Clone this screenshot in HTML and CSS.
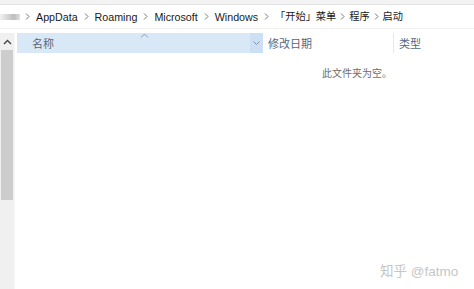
FILE: index.html
```html
<!DOCTYPE html>
<html lang="zh-CN">
<head>
    <meta charset="UTF-8">
    <title>启动</title>
    <link rel="stylesheet" href="styles.css">
</head>
<body>
    <div class="top-strip"></div>
    <div class="address">
        <span class="blur-icon"></span>
        <span class="sep"><svg width="5" height="7" viewBox="0 0 5 7"><path d="M1 0.5 L4 3.5 L1 6.5" fill="none" stroke="#777" stroke-width="1"/></svg></span>
        <span class="crumb">AppData</span>
        <span class="sep"><svg width="5" height="7" viewBox="0 0 5 7"><path d="M1 0.5 L4 3.5 L1 6.5" fill="none" stroke="#777" stroke-width="1"/></svg></span>
        <span class="crumb">Roaming</span>
        <span class="sep"><svg width="5" height="7" viewBox="0 0 5 7"><path d="M1 0.5 L4 3.5 L1 6.5" fill="none" stroke="#777" stroke-width="1"/></svg></span>
        <span class="crumb">Microsoft</span>
        <span class="sep"><svg width="5" height="7" viewBox="0 0 5 7"><path d="M1 0.5 L4 3.5 L1 6.5" fill="none" stroke="#777" stroke-width="1"/></svg></span>
        <span class="crumb">Windows</span>
        <span class="sep"><svg width="5" height="7" viewBox="0 0 5 7"><path d="M1 0.5 L4 3.5 L1 6.5" fill="none" stroke="#777" stroke-width="1"/></svg></span>
        <span class="crumb cjk">「开始」菜单</span>
        <span class="sep sep-cjk"><svg width="5" height="7" viewBox="0 0 5 7"><path d="M1 0.5 L4 3.5 L1 6.5" fill="none" stroke="#777" stroke-width="1"/></svg></span>
        <span class="crumb cjk">程序</span>
        <span class="sep sep-cjk"><svg width="5" height="7" viewBox="0 0 5 7"><path d="M1 0.5 L4 3.5 L1 6.5" fill="none" stroke="#777" stroke-width="1"/></svg></span>
        <span class="crumb cjk">启动</span>
    </div>
    <div class="main">
        <div class="scrollbar">
            <div class="scroll-up"><svg width="9" height="6" viewBox="0 0 9 6"><path d="M1 5 L4.5 1.5 L8 5" fill="none" stroke="#444" stroke-width="1.4"/></svg></div>
            <div class="scroll-thumb"></div>
        </div>
        <div class="content">
            <div class="header">
                <div class="col col-name">
                    <span class="col-label">名称</span>
                    <svg class="sort-arrow" width="9" height="5" viewBox="0 0 9 5"><path d="M1 4.5 L4.5 1 L8 4.5" fill="none" stroke="#8a9bb0" stroke-width="1"/></svg>
                    <div class="dropdown"><svg width="7" height="4" viewBox="0 0 7 4"><path d="M0.5 0.5 L3.5 3.5 L6.5 0.5" fill="none" stroke="#7f93ab" stroke-width="1"/></svg></div>
                </div>
                <div class="col col-date"><span class="col-label">修改日期</span></div>
                <div class="col col-type"><span class="col-label">类型</span></div>
            </div>
            <div class="empty">此文件夹为空。</div>
        </div>
    </div>
    <div class="watermark">知乎 @fatmo</div>
</body>
</html>
```

FILE: styles.css
```css
body {
    margin: 0;
    width: 474px;
    height: 289px;
    overflow: hidden;
    background: #fff;
    font-family: "Liberation Sans", "Noto Sans CJK SC", sans-serif;
    color: #1a1a1a;
    position: relative;
}
.top-strip {
    height: 4px;
    background: #f3f3f3;
    border-bottom: 1px solid #e3e3e3;
}
.address {
    height: 23px;
    display: flex;
    align-items: center;
    font-size: 10.7px;
    border-bottom: 1px solid #f0f0f0;
}
.blur-icon {
    width: 20px;
    height: 6px;
    background: linear-gradient(to right, #f2f2f2, #d4d4d4 40%, #bdbdbd 70%, #e0e0e0);
}
.sep {
    display: flex;
    align-items: center;
    padding: 0 6px;
}
.blur-icon + .sep {
    padding-left: 5px;
    padding-right: 6px;
}
.sep-cjk {
    padding: 0 4px;
}
.crumb {
    line-height: 16px;
}
.cjk {
    font-size: 10.2px;
}
.main {
    display: flex;
    height: 260px;
}
.scrollbar {
    width: 14px;
    margin-top: 4px;
    background: #f0f0f0;
    border-right: 1px solid #f6f6f6;
}
.scroll-up {
    height: 17px;
    display: flex;
    justify-content: center;
    align-items: center;
}
.scroll-thumb {
    height: 150px;
    margin: 0 1px;
    background: #cdcdcd;
}
.content {
    flex: 1;
    padding-left: 2px;
}
.header {
    display: flex;
    height: 20px;
    margin-top: 4px;
    font-size: 11px;
}
.col {
    display: flex;
    align-items: center;
    position: relative;
}
.col-name {
    width: 246px;
    background: #d9e8f7;
    padding-left: 15px;
    box-sizing: border-box;
}
.sort-arrow {
    position: absolute;
    left: 123px;
    top: 0;
}
.dropdown {
    position: absolute;
    right: 0;
    top: 0;
    width: 13px;
    height: 20px;
    background: #cde0f3;
    display: flex;
    justify-content: center;
    align-items: center;
}
.col-date {
    width: 131px;
    padding-left: 5px;
    box-sizing: border-box;
    border-right: 1px solid #e8e8e8;
}
.col-type {
    padding-left: 5px;
}
.col-label {
    color: #56677d;
}
.empty {
    margin-top: 12px;
    padding-left: 305px;
    font-size: 10px;
    color: #6d6d6d;
}
.watermark {
    position: absolute;
    left: 380px;
    top: 260px;
    font-size: 13.5px;
    color: #c6c6c6;
}
```
